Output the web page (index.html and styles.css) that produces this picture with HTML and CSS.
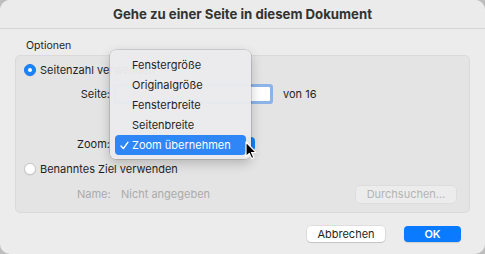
FILE: index.html
```html
<!DOCTYPE html>
<html lang="de">
<head>
<meta charset="utf-8">
<title>Gehe zu einer Seite</title>
<link rel="stylesheet" href="styles.css">
</head>
<body>
<div class="window">
  <div class="titlebar">Gehe zu einer Seite in diesem Dokument</div>
  <div class="main">
    <div class="group-title">Optionen</div>
    <div class="group">
      <div class="row radio-row">
        <span class="radio on"></span>
        <span class="label">Seitenzahl verwenden</span>
      </div>
      <div class="row field-row r-seite">
        <span class="flabel">Seite:</span>
        <span class="textfield"></span>
        <span class="suffix">von 16</span>
      </div>
      <div class="row field-row r-zoom">
        <span class="flabel">Zoom:</span>
        <span class="popup"><span class="popup-cap"></span></span>
      </div>
      <div class="row radio-row r-named">
        <span class="radio"></span>
        <span class="label">Benanntes Ziel verwenden</span>
      </div>
      <div class="row field-row r-name">
        <span class="flabel dis name-label">Name:</span>
        <span class="dis name-value">Nicht angegeben</span>
        <span class="btn browse">Durchsuchen…</span>
      </div>
    </div>
    <div class="footer">
      <span class="btn cancel">Abbrechen</span>
      <span class="btn ok">OK</span>
    </div>
  </div>

  <div class="menu">
    <div class="item">Fenstergröße</div>
    <div class="item">Originalgröße</div>
    <div class="item">Fensterbreite</div>
    <div class="item">Seitenbreite</div>
    <div class="item sel"><svg class="check" width="9" height="9" viewBox="0 0 9 9"><path d="M1 5 L3.4 7.6 L8 1.2" fill="none" stroke="#fff" stroke-width="1.4" stroke-linecap="round" stroke-linejoin="round"/></svg>Zoom übernehmen</div>
  </div>

  <svg class="cursor" width="12" height="19" viewBox="0 0 12 19">
    <path d="M1 1 L1 15.5 L4.3 12.4 L6.6 17.6 L8.8 16.6 L6.6 11.6 L11 11.3 Z" fill="#000" stroke="#fff" stroke-width="1.2" stroke-linejoin="round"/>
  </svg>
</div>
</body>
</html>
```

FILE: styles.css
```css
html, body {
  margin: 0;
  padding: 0;
  background: #bdbdbd;
}
body {
  width: 485px;
  height: 254px;
  overflow: hidden;
  font-family: Inter, "Liberation Sans", sans-serif;
  font-size: 11px;
  color: #1f1f1f;
}
.window {
  position: relative;
  width: 485px;
  height: 254px;
  background: #ececec;
  border-radius: 10px;
  overflow: hidden;
}
.titlebar {
  height: 28px;
  border-bottom: 1px solid #d4d4d4;
  display: flex;
  align-items: center;
  justify-content: center;
  font-weight: 700;
  font-size: 13.2px;
  color: #333;
  background: #ebebeb;
}
.main {
  padding: 0 15px;
}
.group-title {
  margin-top: 10px;
  margin-left: 11px;
  height: 14px;
  line-height: 14px;
  font-size: 10.5px;
}
.group {
  margin-top: 2px;
  height: 152px;
  border: 1px solid #dadada;
  border-radius: 5px;
  background: #e4e4e4;
  padding: 4px 13px 0 8px;
  box-sizing: content-box;
}
.row {
  display: flex;
  align-items: center;
  height: 20px;
}
.radio {
  width: 12px;
  height: 12px;
  border-radius: 50%;
  background: #fff;
  border: 0.5px solid #c8c8c8;
  box-sizing: border-box;
  margin-right: 4px;
  box-shadow: 0 0.5px 1px rgba(0,0,0,0.12);
}
.radio.on {
  background: #1a82fb;
  border-color: #1a7cf0;
  display: flex;
  align-items: center;
  justify-content: center;
}
.radio.on::after {
  content: "";
  width: 4px;
  height: 4px;
  border-radius: 50%;
  background: #fff;
}
.flabel {
  width: 86px;
  text-align: right;
  flex: none;
}
.r-seite { margin-top: 4px; }
.textfield {
  margin-left: 6px;
  width: 154px;
  height: 14px;
  background: #fff;
  border-radius: 1px;
  box-shadow: 0 0 0 3px rgba(70, 140, 235, 0.55);
}
.suffix { margin-left: 13px; }
.r-zoom { margin-top: 30px; }
.popup {
  margin-left: 2px;
  width: 143px;
  height: 14px;
  border-radius: 4px;
  background: #fff;
  display: flex;
  justify-content: flex-end;
}
.popup-cap {
  width: 10px;
  height: 14px;
  border-radius: 4px;
  background: #1a7ffb;
}
.r-named { margin-top: 5px; }
.r-name { margin-top: 5px; }
.dis { color: #ababab; }
.name-label {
  width: 31px;
  margin-left: 53px;
  text-align: left;
}
.name-value { margin-left: 13px; }
.btn {
  display: flex;
  align-items: center;
  justify-content: center;
  height: 16px;
  border-radius: 4px;
  background: #fff;
  box-shadow: 0 0 0 0.5px rgba(0,0,0,0.12), 0 1px 1px rgba(0,0,0,0.12);
}
.browse {
  margin-left: auto;
  width: 100px;
  height: 17px;
  color: #b4b4b4;
  background: #ececec;
  box-shadow: 0 0 0 0.5px rgba(0,0,0,0.06);
}
.footer {
  display: flex;
  justify-content: flex-end;
  margin-top: 13px;
  padding-right: 9px;
  gap: 19px;
}
.cancel { width: 78px; }
.ok {
  width: 57px;
  background: #0a7bff;
  color: #fff;
  font-weight: 600;
  box-shadow: 0 1px 1px rgba(0,0,0,0.12);
}
.menu {
  position: absolute;
  left: 110px;
  top: 50px;
  width: 141px;
  padding: 5px 5px 4px;
  box-sizing: border-box;
  background: rgba(234, 234, 236, 0.97);
  border-radius: 6px;
  box-shadow: 0 0 0 0.5px rgba(0,0,0,0.22), 0 4px 12px rgba(0,0,0,0.22);
}
.item {
  position: relative;
  height: 20px;
  line-height: 20px;
  padding-left: 17px;
  border-radius: 4px;
}
.item.sel {
  background: #2f86f6;
  color: #fff;
}
.check {
  position: absolute;
  left: 5px;
  top: 6px;
}
.cursor {
  position: absolute;
  left: 245px;
  top: 141px;
}
```
